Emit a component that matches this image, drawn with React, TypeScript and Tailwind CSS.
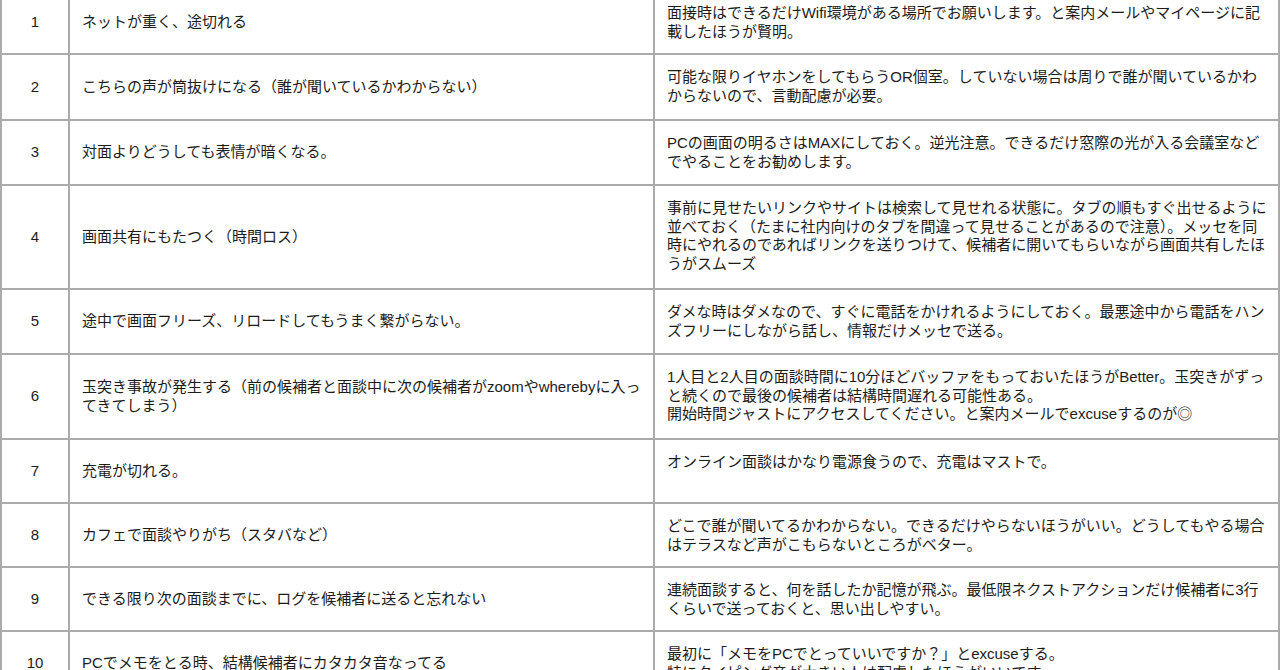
import React from 'react';

interface Row {
  no: number;
  issue: string[];
  tip: string[];
  h: string;
}

// online interview troubles: issue / countermeasure
const rows: Row[] = [
  {
    no: 1,
    issue: ['ネットが重く、途切れる'],
    tip: [
      '面接時はできるだけWifi環境がある場所でお願いします。と案内メールやマイページに記',
      '載したほうが賢明。',
    ],
    h: 'h-[64px]',
  },
  {
    no: 2,
    issue: ['こちらの声が筒抜けになる（誰が聞いているかわからない）'],
    tip: [
      '可能な限りイヤホンをしてもらうOR個室。していない場合は周りで誰が聞いているかわ',
      'からないので、言動配慮が必要。',
    ],
    h: 'h-[66px]',
  },
  {
    no: 3,
    issue: ['対面よりどうしても表情が暗くなる。'],
    tip: [
      'PCの画面の明るさはMAXにしておく。逆光注意。できるだけ窓際の光が入る会議室など',
      'でやることをお勧めします。',
    ],
    h: 'h-[65px]',
  },
  {
    no: 4,
    issue: ['画面共有にもたつく（時間ロス）'],
    tip: [
      '事前に見せたいリンクやサイトは検索して見せれる状態に。タブの順もすぐ出せるように',
      '並べておく（たまに社内向けのタブを間違って見せることがあるので注意）。メッセを同',
      '時にやれるのであればリンクを送りつけて、候補者に開いてもらいながら画面共有したほ',
      'うがスムーズ',
    ],
    h: 'h-[104px]',
  },
  {
    no: 5,
    issue: ['途中で画面フリーズ、リロードしてもうまく繋がらない。'],
    tip: [
      'ダメな時はダメなので、すぐに電話をかけれるようにしておく。最悪途中から電話をハン',
      'ズフリーにしながら話し、情報だけメッセで送る。',
    ],
    h: 'h-[65px]',
  },
  {
    no: 6,
    issue: [
      '玉突き事故が発生する（前の候補者と面談中に次の候補者がzoomやwherebyに入っ',
      'てきてしまう）',
    ],
    tip: [
      '1人目と2人目の面談時間に10分ほどバッファをもっておいたほうがBetter。玉突きがずっ',
      'と続くので最後の候補者は結構時間遅れる可能性ある。',
      '開始時間ジャストにアクセスしてください。と案内メールでexcuseするのが◎',
    ],
    h: 'h-[85px]',
  },
  {
    no: 7,
    issue: ['充電が切れる。'],
    tip: ['オンライン面談はかなり電源食うので、充電はマストで。'],
    h: 'h-[64px]',
  },
  {
    no: 8,
    issue: ['カフェで面談やりがち（スタバなど）'],
    tip: [
      'どこで誰が聞いてるかわからない。できるだけやらないほうがいい。どうしてもやる場合',
      'はテラスなど声がこもらないところがベター。',
    ],
    h: 'h-[64px]',
  },
  {
    no: 9,
    issue: ['できる限り次の面談までに、ログを候補者に送ると忘れない'],
    tip: [
      '連続面談すると、何を話したか記憶が飛ぶ。最低限ネクストアクションだけ候補者に3行',
      'くらいで送っておくと、思い出しやすい。',
    ],
    h: 'h-[64px]',
  },
  {
    no: 10,
    issue: ['PCでメモをとる時、結構候補者にカタカタ音なってる'],
    tip: [
      '最初に「メモをPCでとっていいですか？」とexcuseする。',
      '特にタイピング音が大きい人は配慮したほうがいいです。',
    ],
    h: 'h-[64px]',
  },
];

const Lines = ({ lines }: { lines: string[] }) => (
  <>
    {lines.map((l, i) => (
      <span key={i} className="block whitespace-nowrap">
        {l}
      </span>
    ))}
  </>
);

export default function App() {
  return (
    <div className="h-[670px] w-[1280px] overflow-hidden bg-white">
      <div
        className="-mt-[9px] text-[15px] leading-[18.5px] text-[#1c1c1c]"
        style={{ fontFamily: '"Liberation Sans", "Noto Sans CJK JP", sans-serif' }}
      >
        {rows.map((r) => (
          <div key={r.no} className={`flex ${r.h} border-b-2 border-[#ababab]`}>
            <div className="flex w-[70px] shrink-0 items-center justify-center border-x-2 border-[#ababab]">
              {r.no}
            </div>
            <div className="flex w-[585px] shrink-0 items-center border-r-2 border-[#ababab] pl-[12px]">
              <div>
                <Lines lines={r.issue} />
              </div>
            </div>
            <div className="flex-1 border-r-2 border-[#ababab] pl-[12px] pt-[13px]">
              <Lines lines={r.tip} />
            </div>
          </div>
        ))}
      </div>
    </div>
  );
}
